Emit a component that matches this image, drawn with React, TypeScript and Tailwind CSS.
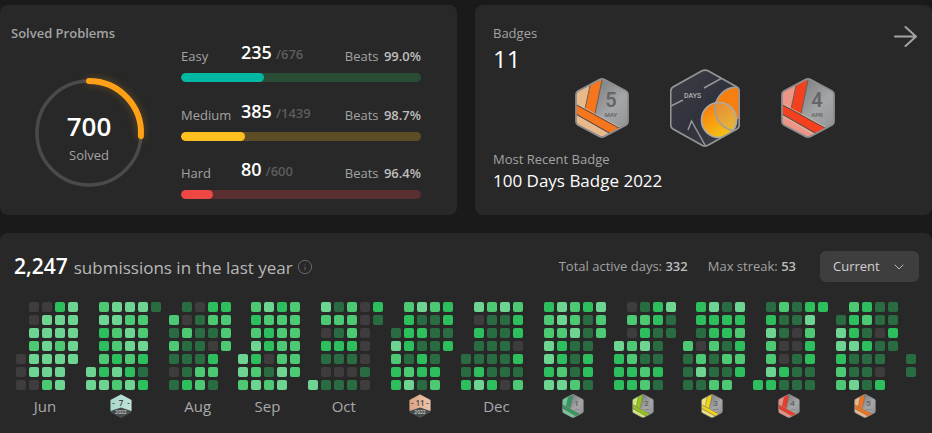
import { ChevronDown, Info } from "lucide-react";
import type { ReactNode } from "react";

const LEVELS: Record<string, string> = {
  ".": "bg-transparent",
  "0": "bg-[#3e3c3d]",
  "1": "bg-[#2a6c42]",
  "2": "bg-[#2dbf5d]",
  "3": "bg-[#4dc974]",
  "4": "bg-[#6dd591]",
};

type Difficulty = {
  name: string;
  solved: number;
  total: number;
  beats: string;
  fill: string;
  track: string;
  share: number;
};

const DIFFICULTIES: Difficulty[] = [
  { name: "Easy", solved: 235, total: 676, beats: "99.0%", fill: "bg-[#02b8a2]", track: "bg-[#2a4c35]", share: 34.7 },
  { name: "Medium", solved: 385, total: 1439, beats: "98.7%", fill: "bg-[#ffc01f]", track: "bg-[#5c4d24]", share: 26.7 },
  { name: "Hard", solved: 80, total: 600, beats: "96.4%", fill: "bg-[#ef4743]", track: "bg-[#59302f]", share: 13.4 },
];

type StripeProps = {
  id: string;
  digit: string;
  month: string;
  band: string;
  pale: string;
  className: string;
};

function StripeBadge({ id, digit, month, band, pale, className }: StripeProps) {
  const hex = "M24.5 1.6Q27 .4 29.5 1.6L51 13Q53 14.2 53 16.5V43.5Q53 45.8 51 47L29.5 58.4Q27 59.6 24.5 58.4L3 47Q1 45.8 1 43.5V16.5Q1 14.2 3 13Z";
  return (
    <svg viewBox="0 0 54 60" className={className} role="img" aria-label={`${month} badge`}>
      <defs>
        <linearGradient id={`${id}-metal`} x1="0" y1="0" x2="1" y2="1">
          <stop offset="0.3" stopColor="#858687" />
          <stop offset="0.6" stopColor="#a5a6a7" />
          <stop offset="1" stopColor="#8c8d8e" />
        </linearGradient>
        <clipPath id={`${id}-clip`}>
          <path d={hex} />
        </clipPath>
      </defs>
      <g clipPath={`url(#${id}-clip)`}>
        <path d="M0 0H54V60H0Z" fill={`url(#${id}-metal)`} />
        <path d="M0 0H17L11 32L0 27Z" fill={pale} />
        <path d="M17 0H27L20 37L10 32Z" fill={band} />
        <path d="M0 26L46 51L38 57L0 35Z" fill={band} />
        <path d="M0 36L40 58L27 62L0 50Z" fill={pale} />
        <path d="M16 3L10 31M27 2L20 36" stroke="#6d5b50" strokeWidth="1" fill="none" />
        <path d="M0 26L46 51M0 35.5L36 56" stroke="#6d4a38" strokeWidth="1.2" fill="none" />
        <path d="M0 25L46 50M0 37L34 57" stroke="#d5c9bd" strokeWidth="0.7" fill="none" />
      </g>
      <path d={hex} fill="none" stroke="#8d8e8f" strokeWidth="1.8" />
      <text textAnchor="middle" fontWeight="600" fill="#646566" className="font-['Roboto',sans-serif]">
        <tspan x="36" y="29" fontSize="20">{digit}</tspan>
        <tspan x="36" y="39" fontSize="6">{month}</tspan>
      </text>
    </svg>
  );
}

function DaysBadge() {
  const hex = "M32 1.8Q35 .3 38 1.8L67 18Q69.3 19.4 69.3 22V56Q69.3 58.6 67 60L38 76.2Q35 77.7 32 76.2L3 60Q.7 58.6 .7 56V22Q.7 19.4 3 18Z";
  return (
    <svg viewBox="0 0 70 78" className="h-[78px] w-[70px]" role="img" aria-label="100 Days Badge 2022">
      <defs>
        <linearGradient id="days-sun" x1="0" y1="0" x2="0.6" y2="1">
          <stop offset="0" stopColor="#f9700e" />
          <stop offset="1" stopColor="#f7c416" />
        </linearGradient>
        <linearGradient id="days-slate" x1="0" y1="0" x2="1" y2="1">
          <stop offset="0" stopColor="#3d3e43" />
          <stop offset="0.5" stopColor="#30323d" />
          <stop offset="1" stopColor="#414246" />
        </linearGradient>
        <clipPath id="days-clip">
          <path d={hex} />
        </clipPath>
        <clipPath id="days-rear">
          <circle cx="67" cy="40" r="22" />
        </clipPath>
      </defs>
      <g clipPath="url(#days-clip)">
        <path d="M0 0H70V78H0Z" fill="url(#days-slate)" />
        <path d="M67 18A22 22 0 0 0 46 34A18 18 0 0 1 67 50H70V18Z" fill="#f5800f" />
        <circle cx="49" cy="51" r="17.5" fill="url(#days-sun)" />
        <circle cx="49" cy="51" r="17.5" fill="#c9a377" opacity="0.35" clipPath="url(#days-rear)" />
        <path d="M70 18.2Q66 17.8 62 18.6A22 22 0 0 0 66 62" fill="none" stroke="#a29d97" strokeWidth="1.7" />
        <circle cx="49" cy="51" r="17.5" fill="none" stroke="#b0aaa2" strokeWidth="1.7" />
        <path d="M1 37L13 31M34 19L52 9M18 61L21.5 52L35 76" fill="none" stroke="#94959a" strokeWidth="1.5" />
      </g>
      <path d={hex} fill="none" stroke="#949599" strokeWidth="1.7" />
      <text x="14" y="29" fontSize="7" fontWeight="500" className="font-['Liberation_Sans_Narrow','Roboto',sans-serif]" fill="#b4b6ba">DAYS</text>
    </svg>
  );
}

function MonthlyMedal({ id, digit, light, shade }: { id: string; digit: string; light: string; shade: string }) {
  return (
    <svg viewBox="0 0 22 24" className="h-6 w-[22px]" role="img" aria-label={`2022 month ${digit} badge`}>
      <defs>
        <linearGradient id={id} x1="0" y1="0" x2="1" y2="0">
          <stop offset="0" stopColor={light} />
          <stop offset="1" stopColor={shade} />
        </linearGradient>
      </defs>
      <path d="M11 .5L21 6V18L11 23.5L1 18V6Z" fill="#474a4a" stroke="#5d6262" strokeWidth="0.6" />
      <path d="M11 .5L21.5 6V17L11 13.5L.5 17V6Z" fill={`url(#${id})`} />
      <path d="M2.5 9.5H4.5M17.5 9.5H19.5" stroke="#4b514f" strokeWidth="1.2" />
      <text textAnchor="middle" fontWeight="600">
        <tspan x="11" y="12" fontSize="8" fill="#414745">{digit}</tspan>
        <tspan x="11" y="20" fontSize="5" fill="#c9cdcc">2022</tspan>
      </text>
    </svg>
  );
}

const MINI = "h-6 w-[22px]";

type Month = { key: string; label: ReactNode; weeks: string[] };

const MONTHS: Month[] = [
  { key: "jun", label: "Jun", weeks: ["....000", "0043440", "0444443", "2443444", "44444.."] },
  {
    key: "jul",
    label: <MonthlyMedal id="medal-7" digit="7" light="#a9d8cc" shade="#bfe3da" />,
    weeks: [".....44", "3422324", "4433243", "4344324", "4334212", "1......"],
  },
  { key: "aug", label: "Aug", weeks: [".313101", "1031112", "0111133", "2310231", "2333..."] },
  { key: "sep", label: "Sep", weeks: ["....443", "3234234", "4322013", "2333344", "333333."] },
  { key: "oct", label: "Oct", weeks: ["......4", "4302101", "1312101", "3332101", "0000010", "21....."] },
  {
    key: "nov",
    label: <MonthlyMedal id="medal-11" digit="11" light="#dca383" shade="#efc4aa" />,
    weeks: ["..14322", "3222134", "4121221", "3111123", "2212..."],
  },
  { key: "dec", label: "Dec", weeks: ["....112", "4021124", "3111112", "4111110", "3220213", "......."] },
  {
    key: "jan",
    label: <StripeBadge id="mini-1" digit="1" month="JAN" band="#2f9a63" pale="#70c69a" className={MINI} />,
    weeks: ["2334424", "4432234", "3341113", "2111221", "433...."],
  },
  {
    key: "feb",
    label: <StripeBadge id="mini-2" digit="2" month="FEB" band="#8fc51d" pale="#d0ec75" className={MINI} />,
    weeks: ["...4222", "0303322", "1324133", "2211121", "411...."],
  },
  {
    key: "mar",
    label: <StripeBadge id="mini-3" digit="3" month="MAR" band="#eed615" pale="#eee478" className={MINI} />,
    weeks: ["...3111", "2210341", "4223113", "1221313", "423232."],
  },
  {
    key: "apr",
    label: <StripeBadge id="mini-4" digit="4" month="APR" band="#ef3a2a" pale="#ed8d82" className={MINI} />,
    weeks: ["......2", "1243342", "3110021", "1100111", "2432211", "2......"],
  },
  {
    key: "may",
    label: <StripeBadge id="mini-5" digit="5" month="MAY" band="#f17420" pale="#edb889" className={MINI} />,
    weeks: [".144233", "3224114", "2312111", "1101102", "1121..."],
  },
  { key: "next-jun", label: "", weeks: ["....11."] },
];

function ProgressRing() {
  return (
    <div className="relative mt-8 ml-[18px] size-[120px] shrink-0">
      <svg viewBox="0 0 120 120" className="size-full" aria-hidden="true">
        <circle cx="60" cy="60" r="52" fill="none" stroke="#4a4a4a" strokeWidth="3.5" />
        <path
          d="M60 8A52 52 0 0 1 111.9 63"
          fill="none"
          stroke="#ffa116"
          strokeWidth="6"
          strokeLinecap="round"
          className="drop-shadow-[0_0_4px_rgba(255,161,22,0.3)]"
        />
      </svg>
      <div className="absolute inset-0 flex flex-col items-center justify-center pt-3">
        <span className="text-[26px] leading-8 font-semibold text-white">700</span>
        <span className="text-[13px] leading-[26px] text-[#a3a3a3]">Solved</span>
      </div>
    </div>
  );
}

function DifficultyRow({ item }: { item: Difficulty }) {
  return (
    <div>
      <div className="flex h-7 items-end">
        <span className="w-[60px] shrink-0 text-[13px] leading-5 text-[#a3a3a3]">{item.name}</span>
        <span className="mb-1 text-lg leading-5 font-semibold text-white">{item.solved}</span>
        <span className="mb-1 ml-1 text-[13px] leading-4 font-semibold text-[#5d5d5d]">/{item.total}</span>
        <span className="ml-auto text-[13px] leading-5 text-[#a3a3a3]">
          Beats <span className="ml-0.5 font-semibold text-[#bdbdbd]">{item.beats}</span>
        </span>
      </div>
      <div className={`mt-[7px] h-[9px] overflow-hidden rounded-full ${item.track}`}>
        <div className={`h-full rounded-full ${item.fill}`} style={{ width: `${item.share}%` }} />
      </div>
    </div>
  );
}

function SolvedCard() {
  return (
    <section className="flex rounded-lg bg-[#282828] pr-9 pb-4 pl-[11px]">
      <div className="w-[170px] shrink-0 pt-5">
        <h2 className="text-[13px] leading-4 font-semibold text-[#a3a3a3]">Solved Problems</h2>
        <ProgressRing />
      </div>
      <div className="flex min-w-0 flex-1 flex-col justify-between pt-[33px]">
        {DIFFICULTIES.map((item) => (
          <DifficultyRow key={item.name} item={item} />
        ))}
      </div>
    </section>
  );
}

function BadgesCard() {
  return (
    <section className="relative rounded-lg bg-[#282828] pt-5 pr-[15px] pb-[22px] pl-[18px]">
      <a href="#badges" aria-label="All badges" className="absolute top-5 right-[15px] text-[#a3a3a3]">
        <svg viewBox="0 0 24 22" className="h-[22px] w-6" fill="none" stroke="currentColor" strokeWidth="2" strokeLinecap="round" strokeLinejoin="round">
          <path d="M2 11.5H23M12.5 2L23 11.5L12.5 21" />
        </svg>
      </a>
      <h2 className="text-[13px] leading-4 text-[#a3a3a3]">Badges</h2>
      <p className="mt-2 text-2xl leading-5 text-white">11</p>
      <div className="flex items-center justify-center gap-[41px]">
        <StripeBadge id="may" digit="5" month="MAY" band="#f5761c" pale="#e9b98a" className="h-[60px] w-[54px]" />
        <DaysBadge />
        <StripeBadge id="apr" digit="4" month="APR" band="#f4401f" pale="#ed9587" className="h-[60px] w-[54px]" />
      </div>
      <p className="mt-1 text-[13px] leading-4 text-[#a3a3a3]">Most Recent Badge</p>
      <p className="mt-0.5 text-[17px] leading-6 text-white">100 Days Badge 2022</p>
    </section>
  );
}

function Calendar() {
  return (
    <div className="flex justify-between px-4 pt-5">
      {MONTHS.map((month) => (
        <div key={month.key}>
          <div className="flex gap-[3px]">
            {month.weeks.map((week, w) => (
              <div key={w} className="flex flex-col gap-[3px]">
                {week.split("").map((level, d) => (
                  <div key={d} className={`size-2.5 rounded-xs ${LEVELS[level]}`} />
                ))}
              </div>
            ))}
          </div>
          <div className="mt-1 flex h-6 items-center justify-center pr-1 text-[15px] text-[#a9a9ab]">{month.label}</div>
        </div>
      ))}
    </div>
  );
}

function SubmissionsCard() {
  return (
    <section className="flex-1 rounded-t-lg bg-[#282828] pt-[18px]">
      <div className="flex items-center pr-[13px] pl-[14px]">
        <h2 className="flex items-baseline text-[17px] leading-6 text-[#b8b8b8]">
          <span className="mr-1.5 text-[21px] leading-6 font-semibold text-white">2,247</span>
          submissions in the last year
        </h2>
        <Info className="ml-1 size-4 text-[#686868]" strokeWidth={1.5} />
        <p className="ml-auto text-[13px] text-[#a3a3a3]">
          Total active days: <span className="font-semibold text-[#bdbdbd]">332</span>
        </p>
        <p className="ml-5 text-[13px] text-[#a3a3a3]">
          Max streak: <span className="font-semibold text-[#bdbdbd]">53</span>
        </p>
        <div className="relative ml-6">
          <select
            aria-label="Period"
            defaultValue="current"
            className="block h-[31px] w-[99px] appearance-none rounded-md bg-[#3e3e3e] pl-[13px] text-[13px] text-[#d0d0d0]"
          >
            <option value="current">Current</option>
          </select>
          <ChevronDown className="pointer-events-none absolute top-2 right-3 size-4 text-[#b8b8b8]" strokeWidth={1.5} />
        </div>
      </div>
      <Calendar />
    </section>
  );
}

export default function App() {
  return (
    <main className="flex min-h-screen flex-col gap-[18px] bg-[#1a1a1a] pt-[5px] font-['Open_Sans','Noto_Sans',sans-serif]">
      <div className="grid grid-cols-2 gap-[18px]">
        <SolvedCard />
        <BadgesCard />
      </div>
      <SubmissionsCard />
    </main>
  );
}
